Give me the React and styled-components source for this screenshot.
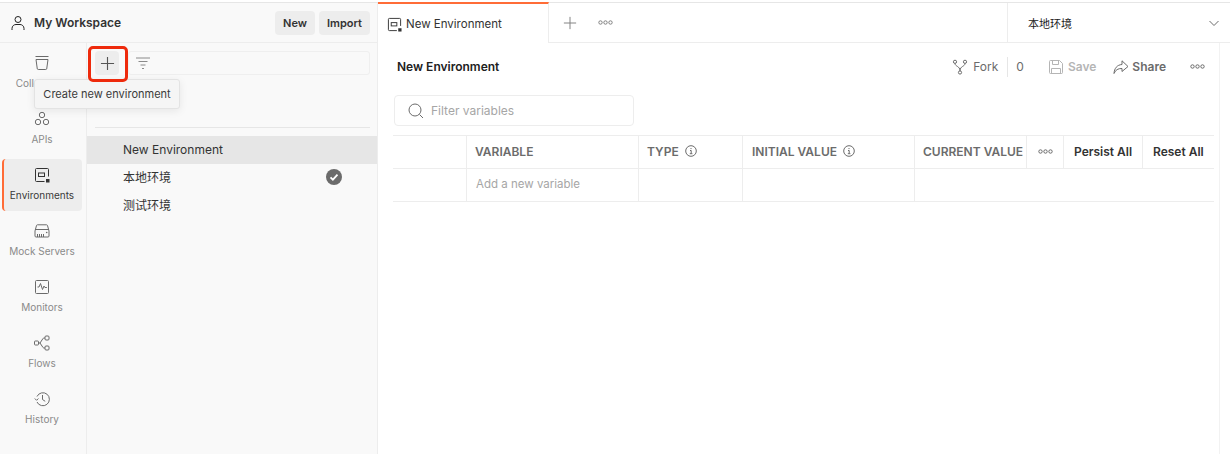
import React from "react";
import styled, { createGlobalStyle } from "styled-components";

const GlobalStyle = createGlobalStyle`
  html, body {
    margin: 0;
    padding: 0;
    background: #fff;
  }
  * {
    box-sizing: border-box;
  }
`;

const cjk = `Inter, "Noto Sans CJK SC", sans-serif`;

const Page = styled.div`
  width: 1230px;
  height: 454px;
  padding-top: 2px;
  overflow: hidden;
  font-family: ${cjk};
  font-size: 12px;
  color: #212121;
  background: #fff;
`;

const Frame = styled.div`
  height: 452px;
  display: flex;
  border-top: 1px solid #e6e6e6;
`;

const Sidebar = styled.aside`
  position: relative;
  width: 378px;
  flex: none;
  display: flex;
  flex-direction: column;
  background: #f9f9f9;
  border-right: 1px solid #ededed;
`;

const WorkspaceBar = styled.header`
  height: 40px;
  flex: none;
  display: flex;
  align-items: center;
  padding: 0 7px 0 10px;
  border-bottom: 1px solid #ededed;
`;

const WorkspaceName = styled.div`
  flex: 1;
  margin-left: 8px;
  font-size: 12px;
  font-weight: 600;
  color: #333;
`;

const HeaderButton = styled.button`
  height: 24px;
  margin-left: 4px;
  padding: 0 8px;
  border: 0;
  border-radius: 4px;
  background: #ededed;
  font: 600 11px ${cjk};
  color: #333;
`;

const SidebarBody = styled.div`
  flex: 1;
  display: flex;
  min-height: 0;
`;

const Rail = styled.nav`
  width: 87px;
  flex: none;
  display: flex;
  flex-direction: column;
  gap: 4px;
  padding: 4px 4px 0 2px;
  border-right: 1px solid #ededed;
`;

const RailItem = styled.div`
  height: 52px;
  display: flex;
  flex-direction: column;
  align-items: center;
  padding: 8px 2px 0 0;
  border-radius: 4px;
  border-left: 2px solid ${(p) => (p.$active ? "#ff6c37" : "transparent")};
  background: ${(p) => (p.$active ? "#ededed" : "transparent")};
  color: ${(p) => (p.$active ? "#333" : "#6b6b6b")};
`;

const RailLabel = styled.span`
  margin-top: 5px;
  font-size: 10px;
  line-height: 14px;
  white-space: nowrap;
  color: ${(p) => (p.$active ? "#3a3a3a" : "#8a8a8a")};
`;

const ListPane = styled.section`
  flex: 1;
  display: flex;
  flex-direction: column;
  padding-top: 8px;
`;

const ListToolbar = styled.div`
  height: 24px;
  display: flex;
  align-items: center;
  margin: 0 7px 0 8px;
`;

const PlusButton = styled.div`
  width: 24px;
  height: 24px;
  display: flex;
  align-items: center;
  justify-content: center;
  border-radius: 4px;
  background: #ededed;
  color: #555;
`;

const FilterField = styled.div`
  flex: 1;
  height: 24px;
  margin-left: 9px;
  display: flex;
  align-items: center;
  padding-left: 6px;
  border: 1px solid #efefef;
  border-radius: 3px;
  color: #8a8a8a;
`;

const Divider = styled.div`
  height: 1px;
  margin: 52px 7px 8px 8px;
  background: #e6e6e6;
`;

const EnvRow = styled.div`
  height: 28px;
  display: flex;
  align-items: center;
  justify-content: space-between;
  padding: 0 35px 2px 36px;
  background: ${(p) => (p.$selected ? "#e6e6e6" : "transparent")};
  font-size: 12px;
  color: #333;
`;

const EnvName = styled.span`
  margin-bottom: ${(p) => (p.$selected ? 0 : 2)}px;
`;

const Highlight = styled.div`
  position: absolute;
  left: 88px;
  top: 43px;
  width: 40px;
  height: 36px;
  border: 3px solid #ee2a0c;
  border-radius: 5px;
`;

const Tooltip = styled.div`
  position: absolute;
  left: 34px;
  top: 76px;
  width: 146px;
  height: 30px;
  display: flex;
  align-items: center;
  justify-content: center;
  background: #f5f5f5;
  border: 1px solid #e3e3e3;
  border-radius: 3px;
  box-shadow: 0 2px 8px rgba(0, 0, 0, 0.08);
  font-size: 11px;
  color: #3a3a3a;
  white-space: nowrap;
`;

const Main = styled.main`
  flex: 1;
  min-width: 0;
  display: flex;
  flex-direction: column;
`;

const TabBar = styled.div`
  height: 40px;
  flex: none;
  display: flex;
  align-items: stretch;
`;

const Tab = styled.div`
  width: 171px;
  height: 41px;
  margin-top: -1px;
  flex: none;
  display: flex;
  align-items: center;
  gap: 4px;
  padding: 1px 0 0 9px;
  border-top: 2px solid #ff6c37;
  border-right: 1px solid #ededed;
  font-size: 11.5px;
  color: #333;
`;

const TabRest = styled.div`
  flex: 1;
  display: flex;
  align-items: center;
  justify-content: space-between;
  border-bottom: 1px solid #ededed;
`;

const TabActions = styled.div`
  display: flex;
  align-items: center;
  gap: 21px;
  padding-left: 14px;
  color: #808080;
`;

const EnvSelect = styled.div`
  width: 223px;
  height: 100%;
  display: flex;
  align-items: center;
  justify-content: space-between;
  padding: 0 10px 0 20px;
  border-left: 1px solid #ededed;
  font-size: 11px;
  color: #212121;
`;

const Content = styled.div`
  flex: 1;
  padding: 0 14px 0 15px;
  margin-right: 10px;
  border-right: 1px solid #f2f2f2;
`;

const TitleRow = styled.div`
  height: 48px;
  display: flex;
  align-items: center;
  padding: 0 0 1px 4px;
`;

const Title = styled.h1`
  flex: 1;
  margin: 0;
  font-size: 12px;
  font-weight: 600;
  color: #212121;
`;

const ActionGroup = styled.div`
  display: flex;
  align-items: center;
  gap: ${(p) => p.$inner || 5}px;
  margin-left: ${(p) => p.$gap || 0}px;
  font-size: 12px;
  font-weight: ${(p) => p.$weight || 400};
  color: ${(p) => p.$color || "#6b6b6b"};
`;

const ForkCount = styled.span`
  margin-left: 4px;
  padding-left: 8px;
  line-height: 20px;
  border-left: 1px solid #e6e6e6;
`;

const SearchBox = styled.div`
  width: 240px;
  height: 31px;
  margin: 4px 0 9px 1px;
  display: flex;
  align-items: center;
  gap: 7px;
  padding-left: 13px;
  border: 1px solid #ededed;
  border-radius: 4px;
  font-size: 12px;
  color: #a6a6a6;
`;

const Table = styled.div`
  width: 821px;
  display: grid;
  grid-template-columns: 73px 172px 104px 172px 112px 37px 79px 72px;
  grid-auto-rows: 33px;
  border-top: 1px solid #ededed;
`;

const Cell = styled.div`
  display: flex;
  align-items: center;
  gap: 6px;
  padding-left: ${(p) => p.$pad ?? 8}px;
  padding-bottom: 2px;
  border-bottom: 1px solid #ededed;
  border-left: ${(p) => (p.$first ? "0" : "1px solid #ededed")};
  font-size: ${(p) => (p.$head ? 12 : 11.5)}px;
  font-weight: ${(p) => (p.$head ? 600 : 400)};
  color: ${(p) => p.$color || "#6b6b6b"};
  white-space: nowrap;
  overflow: hidden;
  grid-column: ${(p) => p.$span || "auto"};
`;

const Icon = ({ size = 16, children, ...rest }) => (
  <svg width={size} height={size} viewBox="0 0 16 16" fill="none" stroke="currentColor" strokeWidth="1" {...rest}>
    {children}
  </svg>
);

const EnvGlyph = ({ size = 16 }) => (
  <Icon size={size}>
    <path d="M14.500 9.500V2.500a1 1 0 0 0-1-1H2.500a1 1 0 0 0-1 1v11a1 1 0 0 0 1 1H10.500" />
    <rect x="4.500" y="6" width="6" height="3.500" />
    <rect x="12" y="12" width="3.500" height="3.500" fill="currentColor" stroke="none" />
  </Icon>
);

const Dots = () => (
  <svg width="15" height="5" viewBox="0 0 15 5" fill="none" stroke="currentColor">
    <circle cx="2.500" cy="2.500" r="1.700" />
    <circle cx="7.500" cy="2.500" r="1.700" />
    <circle cx="12.500" cy="2.500" r="1.700" />
  </svg>
);

const Info = () => (
  <svg width="12" height="12" viewBox="0 0 12 12" fill="none" stroke="currentColor">
    <circle cx="6" cy="6" r="5.300" />
    <path d="M5 5.500h1.200v3M4.800 8.700h2.600M6 3v1.100" />
  </svg>
);

const navItems = [
  {
    label: "Collections",
    icon: (
      <Icon>
        <path d="M1.500 1.500h13M2 4.500h12l-1.300 9.500a1 1 0 0 1-1 .5H4.300a1 1 0 0 1-1-.5z" />
      </Icon>
    ),
  },
  {
    label: "APIs",
    icon: (
      <Icon>
        <circle cx="8" cy="4" r="2.700" />
        <circle cx="4" cy="11" r="2.700" />
        <circle cx="12" cy="11" r="2.700" />
      </Icon>
    ),
  },
  { label: "Environments", active: true, icon: <EnvGlyph /> },
  {
    label: "Mock Servers",
    icon: (
      <Icon>
        <path d="M1 8l1.500-5.500a1 1 0 0 1 1-.7h9a1 1 0 0 1 1 .7L15 8v5a1 1 0 0 1-1 1H2a1 1 0 0 1-1-1z" />
        <path d="M1 6.500h14M3.500 14v-3M5.500 14v-3M7.500 14v-3M9.500 14v-3" />
        <circle cx="12.700" cy="9.500" r=".8" fill="currentColor" stroke="none" />
      </Icon>
    ),
  },
  {
    label: "Monitors",
    icon: (
      <Icon>
        <rect x="1.500" y="1.500" width="13" height="13" rx="1" />
        <path d="M3.500 8h1.500l1.500-3.500 2 6 1.500-3.500.9 1.500h2" />
      </Icon>
    ),
  },
  {
    label: "Flows",
    icon: (
      <Icon>
        <rect x=".5" y="6" width="4" height="4" rx=".8" />
        <rect x="11" y="1" width="4" height="4" rx="1" />
        <rect x="11" y="11" width="4" height="4" rx="1" />
        <path d="M4.500 8h1.500l3-4.500c.3-.4.7-.5 2-.5M6 8l3 4.500c.3.4.7.5 2 .5" />
      </Icon>
    ),
  },
  {
    label: "History",
    icon: (
      <Icon>
        <path d="M3 5.500A6.500 6.500 0 1 1 3 11" />
        <path d="M.8 7.500l1.800 1.800 1.800-1.800M8.500 4v4.500l2.700 1.800" />
      </Icon>
    ),
  },
];

const environments = [
  { name: "New Environment", selected: true },
  { name: "本地环境", active: true },
  { name: "测试环境" },
];

export default function App() {
  return (
    <Page>
      <GlobalStyle />
      <Frame>
        <Sidebar>
          <WorkspaceBar>
            <Icon>
              <circle cx="8" cy="4.500" r="3" />
              <path d="M2 15v-1.500c0-2.500 2-4 4-4h4c2 0 4 1.500 4 4V15" />
            </Icon>
            <WorkspaceName>My Workspace</WorkspaceName>
            <HeaderButton>New</HeaderButton>
            <HeaderButton>Import</HeaderButton>
          </WorkspaceBar>
          <SidebarBody>
            <Rail>
              {navItems.map((item) => (
                <RailItem key={item.label} $active={item.active}>
                  {item.icon}
                  <RailLabel $active={item.active}>{item.label}</RailLabel>
                </RailItem>
              ))}
            </Rail>
            <ListPane>
              <ListToolbar>
                <PlusButton>
                  <Icon size={15}>
                    <path d="M8 1v14M1 8h14" strokeWidth="1.200" />
                  </Icon>
                </PlusButton>
                <FilterField>
                  <Icon>
                    <path d="M1 3h14M3.500 6.500h9M5.500 10h5M7 13.500h2" />
                  </Icon>
                </FilterField>
              </ListToolbar>
              <Divider />
              {environments.map((env) => (
                <EnvRow key={env.name} $selected={env.selected}>
                  <EnvName $selected={env.selected}>{env.name}</EnvName>
                  {env.active && (
                    <svg width="16" height="16" viewBox="0 0 16 16">
                      <circle cx="8" cy="8" r="8" fill="#6b6b6b" />
                      <path d="M4.500 8.300l2.400 2.400 4.600-5" fill="none" stroke="#fff" strokeWidth="1.800" />
                    </svg>
                  )}
                </EnvRow>
              ))}
            </ListPane>
          </SidebarBody>
          <Tooltip>Create new environment</Tooltip>
          <Highlight />
        </Sidebar>
        <Main>
          <TabBar>
            <Tab>
              <EnvGlyph size={15} />
              New Environment
            </Tab>
            <TabRest>
              <TabActions>
                <Icon size={14}>
                  <path d="M8 1v14M1 8h14" strokeWidth="1.100" />
                </Icon>
                <Dots />
              </TabActions>
              <EnvSelect>
                本地环境
                <svg width="12" height="12" viewBox="0 0 12 12" fill="none" stroke="#6b6b6b">
                  <path d="M1.500 4l4.500 4.500L10.500 4" />
                </svg>
              </EnvSelect>
            </TabRest>
          </TabBar>
          <Content>
            <TitleRow>
              <Title>New Environment</Title>
              <ActionGroup>
                <Icon>
                  <circle cx="3" cy="2.800" r="1.600" />
                  <circle cx="13" cy="2.800" r="1.600" />
                  <circle cx="8" cy="13.500" r="1.600" />
                  <path d="M3 4.500c0 3 5 2.500 5 7.300M13 4.500c0 3-5 2.500-5 7.300" />
                </Icon>
                Fork
                <ForkCount>0</ForkCount>
              </ActionGroup>
              <ActionGroup $gap={24} $inner={4} $color="#b5b5b5" $weight={600}>
                <Icon>
                  <path d="M1.500 2.500a1 1 0 0 1 1-1h9l3 3v9a1 1 0 0 1-1 1h-11a1 1 0 0 1-1-1z" />
                  <path d="M4.500 1.500v4h6v-4M3.500 14.500V9.500h9v5" />
                </Icon>
                Save
              </ActionGroup>
              <ActionGroup $gap={17} $inner={3} $weight={600}>
                <Icon>
                  <path d="M9 1.800L15 7.500 9 12.500V9.500C5 9.300 2.500 11 1 14.500c.3-5 3-8.700 8-9z" strokeLinejoin="round" />
                </Icon>
                Share
              </ActionGroup>
              <ActionGroup $gap={24}>
                <Dots />
              </ActionGroup>
            </TitleRow>
            <SearchBox>
              <Icon>
                <circle cx="7" cy="7" r="6" stroke="#6b6b6b" />
                <path d="M11.500 11.500l3.500 3.500" stroke="#6b6b6b" />
              </Icon>
              Filter variables
            </SearchBox>
            <Table>
              <Cell $first />
              <Cell $head>VARIABLE</Cell>
              <Cell $head>
                TYPE <Info />
              </Cell>
              <Cell $head $pad={9}>
                INITIAL VALUE <Info />
              </Cell>
              <Cell $head>CURRENT VALUE</Cell>
              <Cell $head $pad={11}>
                <Dots />
              </Cell>
              <Cell $head $color="#333" $pad={10}>Persist All</Cell>
              <Cell $head $color="#333" $pad={10}>Reset All</Cell>

              <Cell $first />
              <Cell $color="#a6a6a6" $pad={9}>Add a new variable</Cell>
              <Cell />
              <Cell />
              <Cell $span="span 4" />
            </Table>
          </Content>
        </Main>
      </Frame>
    </Page>
  );
}
